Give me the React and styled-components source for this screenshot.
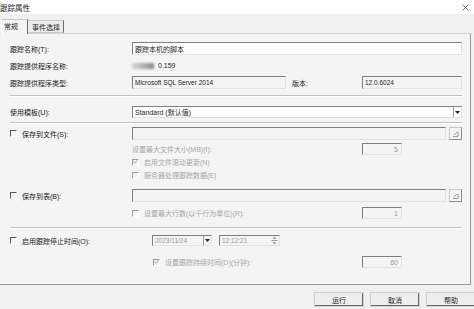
import React from "react";
import styled, { createGlobalStyle } from "styled-components";

const Global = createGlobalStyle`
  html, body { margin: 0; padding: 0; background: #f0f0f0; }
  body { width: 474px; height: 309px; overflow: hidden; }
  * { box-sizing: border-box; }
`;

const FONT = `"Liberation Sans", "Noto Sans CJK SC", sans-serif`;

const Window = styled.div`
  width: 474px;
  height: 309px;
  display: flex;
  flex-direction: column;
  background: #f0f0f0;
  font-family: ${FONT};
  font-size: 7px;
  color: #1e1e1e;
`;

const TitleBar = styled.div`
  height: 14px;
  background: #fff;
  display: flex;
  align-items: center;
  justify-content: space-between;
  padding: 0 5px 0 0;
`;

const Title = styled.span`
  font-size: 7.5px;
  margin-left: 0;
  color: #222;
`;

const TabStrip = styled.div`
  height: 19px;
  display: flex;
  align-items: flex-end;
  padding-left: 1px;
  position: relative;
  z-index: 1;
`;

const Tab = styled.div`
  height: ${(p) => (p.$active ? "15px" : "13px")};
  margin-bottom: ${(p) => (p.$active ? "-1px" : "0")};
  padding: ${(p) => (p.$active ? "2px 9px 0 2px" : "2px 3px 0 4px")};
  background: ${(p) => (p.$active ? "#f4f4f4" : "#ececec")};
  border: 1px solid #c8c8c8;
  border-bottom: ${(p) => (p.$active ? "none" : "1px solid #c8c8c8")};
  border-right: 1px solid #6f6f6f;
  border-left: ${(p) => (p.$active ? "1px solid #fff" : "none")};
  font-size: 7px;
  line-height: 9px;
`;

const Panel = styled.div`
  height: 252px;
  margin-right: 3px;
  background: #f4f4f4;
  border-top: 1px solid #d4d4d4;
  border-right: 1px solid #9a9a9a;
  border-bottom: 1px solid #9a9a9a;
  padding: 0 8px 0 10px;
  display: flex;
  flex-direction: column;
`;

const Row = styled.div`
  display: grid;
  grid-template-columns: 122px 1fr;
  align-items: center;
  height: ${(p) => p.$h || 13}px;
  margin-top: ${(p) => p.$mt || 0}px;
`;

const Label = styled.span`
  display: flex;
  align-items: center;
  gap: 5px;
  color: ${(p) => (p.$disabled ? "#a8a8a8" : "#1a1a1a")};
  white-space: nowrap;
`;

const Sep = styled.div`
  height: 2px;
  border-top: 1px solid #c2c2c2;
  border-bottom: 1px solid #fff;
  margin-top: ${(p) => p.$mt || 0}px;
`;

const Box = styled.div`
  height: 100%;
  width: ${(p) => (p.$w ? `${p.$w}px` : "auto")};
  flex: ${(p) => (p.$w ? "none" : "1")};
  background: ${(p) => (p.$white ? "#fff" : "transparent")};
  border-top: 1px solid #7f7f7f;
  border-left: 1px solid #7f7f7f;
  border-right: 1px solid #e2e2e2;
  border-bottom: 1px solid #e2e2e2;
  display: flex;
  align-items: center;
  justify-content: ${(p) => (p.$right ? "flex-end" : "flex-start")};
  padding: 0 3px 0 2px;
  color: ${(p) => (p.$muted ? "#9a9a9a" : "#1e1e1e")};
  font-size: ${(p) => (p.$latin ? "6.5px" : "7px")};
  white-space: nowrap;
  overflow: hidden;
`;

const Line = styled.div`
  display: flex;
  align-items: center;
  height: 100%;
  gap: ${(p) => p.$gap || 0}px;
  padding-left: ${(p) => p.$pl || 0}px;
`;

const Grow = styled.div`
  flex: 1;
  display: flex;
  align-items: center;
  gap: 5px;
  color: ${(p) => (p.$dark ? "#1a1a1a" : "#a8a8a8")};
  padding-left: ${(p) => p.$pl || 0}px;
  white-space: nowrap;
`;

const SmallEnd = styled.div`
  width: 40px;
  height: 100%;
  margin-right: 60px;
`;

const Check = styled.span`
  width: 7px;
  height: 7px;
  flex: none;
  border-top: 1px solid ${(p) => (p.$disabled ? "#9c9c9c" : "#555")};
  border-left: 1px solid ${(p) => (p.$disabled ? "#9c9c9c" : "#555")};
  border-right: 1px solid #fff;
  border-bottom: 1px solid #fff;
  display: inline-flex;
  align-items: center;
  justify-content: center;
`;

const Blur = styled.span`
  width: 22px;
  height: 6px;
  margin-right: 4px;
  background: linear-gradient(90deg, #d8d8d8, #a9a9a9 60%, #8c8c8c);
  filter: blur(1px);
`;

const Browse = styled.div`
  width: 13px;
  height: 13px;
  flex: none;
  margin-left: 3px;
  border: 1px solid #c8c8c8;
  border-right-color: #8a8a8a;
  border-bottom-color: #8a8a8a;
  display: flex;
  align-items: center;
  justify-content: center;
`;

const Arrow = styled.span`
  width: 7px;
  height: 100%;
  margin-right: -2px;
  margin-left: auto;
  display: flex;
  align-items: center;
  justify-content: center;
  border-left: ${(p) => (p.$boxed ? "1px solid #9a9a9a" : "none")};
`;

const Footer = styled.div`
  flex: 1;
  display: flex;
  justify-content: flex-end;
  align-items: flex-start;
  gap: 6px;
  padding-top: 7px;
  margin-right: -2px;
`;

const Button = styled.div`
  width: 50px;
  height: 15px;
  background: #eeeeee;
  border: 1px solid #d0d0d0;
  box-shadow: inset -1px -1px 0 #6a6a6a;
  display: flex;
  align-items: center;
  justify-content: center;
  font-size: 7px;
`;

const CheckMark = () => (
  <svg width="6" height="6" viewBox="0 0 6 6">
    <path d="M0.5 2.5 L2.3 4.5 L5.5 0.6" stroke="#9a9a9a" strokeWidth="1" fill="none" />
  </svg>
);

const Down = () => (
  <svg width="5" height="3" viewBox="0 0 5 3">
    <path d="M0 0 H5 L2.5 3 Z" fill="#222" />
  </svg>
);

const Spin = () => (
  <svg width="7" height="9" viewBox="0 0 7 9">
    <path d="M0.5 4.5 H6.5" stroke="#999" strokeWidth="1" />
    <path d="M3.5 0.5 L1.5 2.8 H5.5 Z M3.5 8.5 L1.5 6.2 H5.5 Z" fill="#999" />
  </svg>
);

const BrowseIcon = () => (
  <svg width="7" height="7" viewBox="0 0 7 7">
    <path d="M1 6.5 H6 V1.5" stroke="#9a9a9a" strokeWidth="1" fill="none" />
    <path d="M2 5 L5 2" stroke="#9a9a9a" strokeWidth="1" />
  </svg>
);

const Close = () => (
  <svg width="7" height="7" viewBox="0 0 7 7">
    <path d="M0.5 0.5 L6.5 6.5 M6.5 0.5 L0.5 6.5" stroke="#555" strokeWidth="0.8" />
  </svg>
);

export default function App() {
  return (
    <>
      <Global />
      <Window>
        <TitleBar>
          <Title>跟踪属性</Title>
          <Close />
        </TitleBar>
        <TabStrip>
          <Tab $active>常规</Tab>
          <Tab>事件选择</Tab>
        </TabStrip>
        <Panel>
          <Row $mt={8}>
            <Label>跟踪名称(T):</Label>
            <Box $white>跟踪本机的脚本</Box>
          </Row>
          <Row $mt={4}>
            <Label>跟踪提供程序名称:</Label>
            <Line>
              <Blur />
              0.159
            </Line>
          </Row>
          <Row $mt={4}>
            <Label>跟踪提供程序类型:</Label>
            <Line>
              <Box $w={154} $latin>Microsoft SQL Server 2014</Box>
              <Grow $pl={6} $dark>版本:</Grow>
              <Box $w={100} $latin>12.0.6024</Box>
            </Line>
          </Row>
          <Sep $mt={6} />
          <Row $mt={9} $h={12}>
            <Label>使用模板(U):</Label>
            <Box $white>
              Standard (默认值)
              <Arrow $boxed>
                <Down />
              </Arrow>
            </Box>
          </Row>
          <Sep $mt={4} />
          <Row $mt={3}>
            <Label>
              <Check />
              保存到文件(S):
            </Label>
            <Line>
              <Box />
              <Browse>
                <BrowseIcon />
              </Browse>
            </Line>
          </Row>
          <Row $mt={3} $h={12}>
            <span />
            <Line>
              <Grow>设置最大文件大小(MB)(I):</Grow>
              <SmallEnd>
                <Box $right $muted>5</Box>
              </SmallEnd>
            </Line>
          </Row>
          <Row $mt={2} $h={10}>
            <span />
            <Grow>
              <Check $disabled>
                <CheckMark />
              </Check>
              启用文件滚动更新(N)
            </Grow>
          </Row>
          <Row $mt={3} $h={10}>
            <span />
            <Grow>
              <Check $disabled />
              服务器处理跟踪数据(E)
            </Grow>
          </Row>
          <Row $mt={9} $h={12}>
            <Label>
              <Check />
              保存到表(B):
            </Label>
            <Line>
              <Box />
              <Browse>
                <BrowseIcon />
              </Browse>
            </Line>
          </Row>
          <Row $mt={6} $h={12}>
            <span />
            <Line>
              <Grow>
                <Check $disabled />
                设置最大行数(以千行为单位)(R):
              </Grow>
              <SmallEnd>
                <Box $right $muted>1</Box>
              </SmallEnd>
            </Line>
          </Row>
          <Sep $mt={8} />
          <Row $mt={6} $h={11}>
            <Label>
              <Check />
              启用跟踪停止时间(O):
            </Label>
            <Line $gap={7} $pl={20}>
              <Box $w={60} $muted $latin>
                2023/11/24
                <Arrow $boxed>
                  <Down />
                </Arrow>
              </Box>
              <Box $w={61} $muted $latin>
                12:12:21
                <Arrow>
                  <Spin />
                </Arrow>
              </Box>
            </Line>
          </Row>
          <Row $mt={10} $h={12}>
            <span />
            <Line>
              <Grow $pl={21}>
                <Check $disabled>
                  <CheckMark />
                </Check>
                设置跟踪持续时间(D)(分钟):
              </Grow>
              <SmallEnd>
                <Box $right $muted>60</Box>
              </SmallEnd>
            </Line>
          </Row>
        </Panel>
        <Footer>
          <Button>运行</Button>
          <Button>取消</Button>
          <Button>帮助</Button>
        </Footer>
      </Window>
    </>
  );
}
